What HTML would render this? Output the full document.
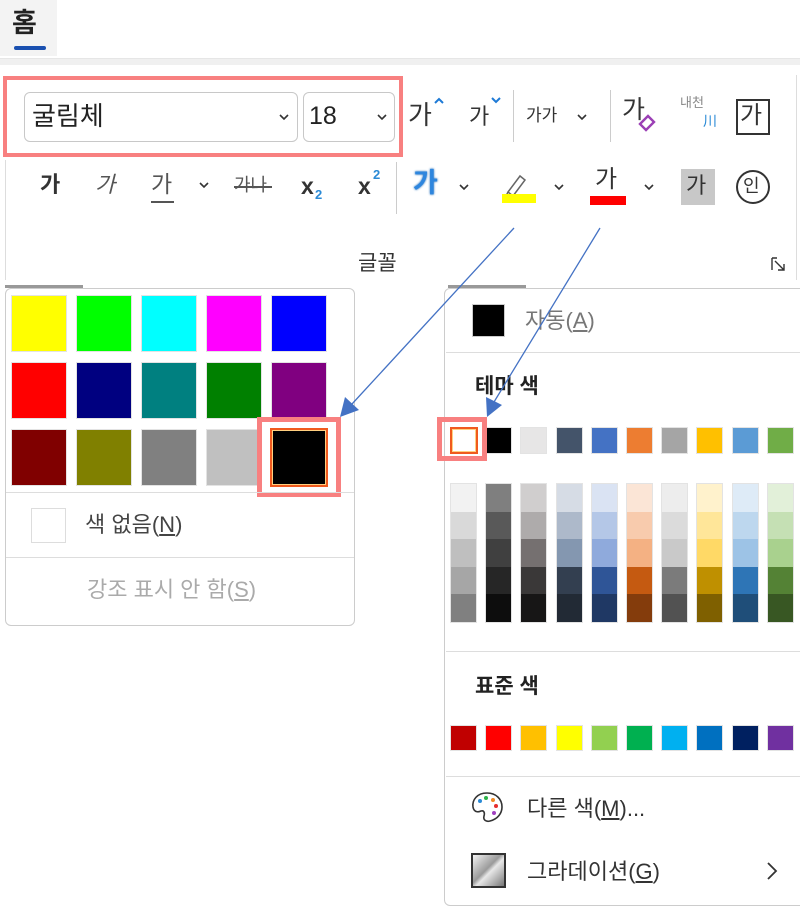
<!DOCTYPE html>
<html><head><meta charset="utf-8"><style>
*{margin:0;padding:0;box-sizing:border-box}
body{width:800px;height:909px;background:#fff;position:relative;overflow:hidden;font-family:"Liberation Sans","Noto Sans CJK KR",sans-serif;color:#333}
.a{position:absolute}
.t{position:absolute;white-space:nowrap;line-height:1}
.sw{position:absolute;border:1px solid #e3e3e3}
</style></head><body>
<div class="a" style="left:0;top:0;width:57px;height:56px;background:#f3f3f3"></div>
<div class="t" style="left:12px;top:10px;font-size:27px;color:#222;font-weight:bold">홈</div>
<div class="a" style="left:14px;top:46px;width:32px;height:4px;background:#1a50b0;border-radius:2px"></div>
<div class="a" style="left:0;top:58px;width:800px;height:7px;background:#f0f0f0;border-top:1px solid #e6e6e6"></div>
<div class="a" style="left:5px;top:160px;width:1px;height:120px;background:#ddd"></div>
<div class="a" style="left:796px;top:75px;width:1px;height:205px;background:#ddd"></div>
<div class="a" style="left:3px;top:76px;width:400px;height:81px;border:4px solid #f88080"></div>
<div class="a" style="left:24px;top:92px;width:274px;height:50px;border:1px solid #c8c8c8;border-radius:6px"></div>
<div class="t" style="left:32px;top:103px;font-size:26px;color:#222">굴림체</div>
<svg class="a" style="left:278px;top:112px" width="12" height="10"><path d="M2 3l4 4 4-4" stroke="#333" stroke-width="1.6" fill="none"/></svg>
<div class="a" style="left:303px;top:92px;width:92px;height:50px;border:1px solid #c8c8c8;border-radius:6px"></div>
<div class="t" style="left:309px;top:104px;font-size:25px;color:#222">18</div>
<svg class="a" style="left:376px;top:112px" width="12" height="10"><path d="M2 3l4 4 4-4" stroke="#333" stroke-width="1.6" fill="none"/></svg>
<div class="t" style="left:408px;top:102px;font-size:26px;color:#333">가</div>
<svg class="a" style="left:434px;top:97px" width="10" height="8"><path d="M1 6l4-4 4 4" stroke="#1e7ad6" stroke-width="2" fill="none"/></svg>
<div class="t" style="left:469px;top:106px;font-size:22px;color:#333">가</div>
<svg class="a" style="left:491px;top:96px" width="10" height="8"><path d="M1 2l4 4 4-4" stroke="#1e7ad6" stroke-width="2" fill="none"/></svg>
<div class="a" style="left:513px;top:90px;width:1px;height:52px;background:#ccc"></div>
<div class="t" style="left:526px;top:107px;font-size:17px;color:#333">가가</div>
<svg class="a" style="left:576px;top:112px" width="12" height="10"><path d="M2 3l4 4 4-4" stroke="#333" stroke-width="1.6" fill="none"/></svg>
<div class="a" style="left:610px;top:90px;width:1px;height:52px;background:#ccc"></div>
<div class="t" style="left:622px;top:98px;font-size:25px;color:#333">가</div>
<svg class="a" style="left:636px;top:110px" width="24" height="24"><path d="M4 14l8-8 6 6-8 8z" stroke="#9b3fb5" stroke-width="2.4" fill="none"/></svg>
<div class="t" style="left:680px;top:96px;font-size:13px;color:#888">내천</div>
<div class="t" style="left:703px;top:114px;font-size:14px;color:#2a8ad6">川</div>
<div class="a" style="left:736px;top:99px;width:34px;height:36px;border:2px solid #333"></div>
<div class="t" style="left:740px;top:104px;font-size:24px;color:#333">가</div>
<div class="t" style="left:40px;top:174px;font-size:22px;font-weight:bold;color:#333">가</div>
<div class="t" style="left:95px;top:174px;font-size:22px;font-style:italic;color:#555">가</div>
<div class="t" style="left:151px;top:173px;font-size:23px;color:#555">가</div>
<div class="a" style="left:151px;top:201px;width:23px;height:2px;background:#555"></div>
<svg class="a" style="left:198px;top:180px" width="12" height="10"><path d="M2 3l4 4 4-4" stroke="#333" stroke-width="1.6" fill="none"/></svg>
<div class="t" style="left:234px;top:176px;font-size:18px;color:#555">가나</div>
<div class="a" style="left:234px;top:186px;width:38px;height:1.5px;background:#555"></div>
<div class="t" style="left:301px;top:175px;font-size:23px;font-weight:bold;color:#333">x</div>
<div class="t" style="left:315px;top:188px;font-size:13px;font-weight:bold;color:#2a8ad6">2</div>
<div class="t" style="left:358px;top:175px;font-size:23px;font-weight:bold;color:#333">x</div>
<div class="t" style="left:373px;top:168px;font-size:13px;font-weight:bold;color:#2a8ad6">2</div>
<div class="a" style="left:396px;top:162px;width:1px;height:52px;background:#ccc"></div>
<div class="t" style="left:413px;top:170px;font-size:27px;font-weight:bold;color:#2e86de;text-shadow:0 0 2px #1060b0">가</div>
<svg class="a" style="left:458px;top:182px" width="12" height="10"><path d="M2 3l4 4 4-4" stroke="#333" stroke-width="1.6" fill="none"/></svg>
<svg class="a" style="left:502px;top:168px" width="34" height="38"><path d="M6 24l12-16 5 4-12 16z M6 24l-2 4 6-1" stroke="#666" stroke-width="1.5" fill="none"/><rect x="0" y="26" width="34" height="9" fill="#ffff00"/></svg>
<svg class="a" style="left:553px;top:182px" width="12" height="10"><path d="M2 3l4 4 4-4" stroke="#333" stroke-width="1.6" fill="none"/></svg>
<div class="t" style="left:595px;top:168px;font-size:24px;color:#333">가</div>
<div class="a" style="left:590px;top:196px;width:36px;height:9px;background:#ff0000"></div>
<svg class="a" style="left:643px;top:182px" width="12" height="10"><path d="M2 3l4 4 4-4" stroke="#333" stroke-width="1.6" fill="none"/></svg>
<div class="a" style="left:681px;top:169px;width:34px;height:36px;background:#c8c8c8"></div>
<div class="t" style="left:686px;top:175px;font-size:22px;color:#333">가</div>
<div class="a" style="left:736px;top:170px;width:34px;height:34px;border:2px solid #333;border-radius:50%"></div>
<div class="t" style="left:743px;top:177px;font-size:18px;color:#333">인</div>
<div class="t" style="left:358px;top:253px;font-size:21px;color:#333">글꼴</div>
<svg class="a" style="left:770px;top:256px" width="16" height="16"><path d="M2 2v12M2 2h5M5 5l9 9M14 8v6h-6" stroke="#333" stroke-width="1.4" fill="none"/></svg>
<div class="a" style="left:5px;top:285px;width:78px;height:3px;background:#999"></div>
<div class="a" style="left:448px;top:285px;width:78px;height:3px;background:#999"></div>
<div class="a" style="left:5px;top:288px;width:350px;height:338px;border:1px solid #ccc;border-radius:6px;background:#fff"></div>
<div class="sw" style="left:11px;top:295px;width:56px;height:57px;background:#ffff00"></div>
<div class="sw" style="left:76px;top:295px;width:56px;height:57px;background:#00ff00"></div>
<div class="sw" style="left:141px;top:295px;width:56px;height:57px;background:#00ffff"></div>
<div class="sw" style="left:206px;top:295px;width:56px;height:57px;background:#ff00ff"></div>
<div class="sw" style="left:271px;top:295px;width:56px;height:57px;background:#0000ff"></div>
<div class="sw" style="left:11px;top:362px;width:56px;height:57px;background:#ff0000"></div>
<div class="sw" style="left:76px;top:362px;width:56px;height:57px;background:#000080"></div>
<div class="sw" style="left:141px;top:362px;width:56px;height:57px;background:#008080"></div>
<div class="sw" style="left:206px;top:362px;width:56px;height:57px;background:#008000"></div>
<div class="sw" style="left:271px;top:362px;width:56px;height:57px;background:#800080"></div>
<div class="sw" style="left:11px;top:429px;width:56px;height:57px;background:#800000"></div>
<div class="sw" style="left:76px;top:429px;width:56px;height:57px;background:#808000"></div>
<div class="sw" style="left:141px;top:429px;width:56px;height:57px;background:#808080"></div>
<div class="sw" style="left:206px;top:429px;width:56px;height:57px;background:#c0c0c0"></div>
<div class="a" style="left:257px;top:417px;width:84px;height:80px;border:5px solid #f88080"></div>
<div class="a" style="left:270px;top:428px;width:58px;height:59px;background:#000;border:2px solid #f05a1e;box-shadow:inset 0 0 0 1px #ffd080"></div>
<div class="a" style="left:6px;top:492px;width:348px;height:1px;background:#ddd"></div>
<div class="a" style="left:31px;top:508px;width:35px;height:35px;border:1px solid #ddd"></div>
<div class="t" style="left:85px;top:514px;font-size:22px;color:#444">색 없음(<u>N</u>)</div>
<div class="a" style="left:6px;top:557px;width:348px;height:1px;background:#ddd"></div>
<div class="t" style="left:87px;top:579px;font-size:22px;color:#aaa">강조 표시 안 함(<u>S</u>)</div>
<div class="a" style="left:444px;top:288px;width:370px;height:618px;border:1px solid #ccc;border-radius:6px;background:#fff"></div>
<div class="a" style="left:472px;top:304px;width:33px;height:33px;background:#000;border:1px solid #ccc"></div>
<div class="t" style="left:525px;top:310px;font-size:22px;color:#777">자동(<u>A</u>)</div>
<div class="a" style="left:446px;top:352px;width:354px;height:1px;background:#ddd"></div>
<div class="t" style="left:475px;top:376px;font-size:21px;font-weight:bold;color:#222">테마 색</div>
<div class="a" style="left:446px;top:651px;width:354px;height:1px;background:#ddd"></div>
<div class="t" style="left:475px;top:676px;font-size:21px;font-weight:bold;color:#222">표준 색</div>
<div class="a" style="left:446px;top:776px;width:354px;height:1px;background:#ddd"></div>
<svg class="a" style="left:469px;top:789px" width="36" height="36" viewBox="0 0 36 36"><path d="M18 4C8 4 3 11 4 18c1 6 6 5 8 4 3-1 4 2 3 5-1 4 2 6 6 5 8-2 12-8 12-14C33 10 27 4 18 4z" stroke="#333" stroke-width="1.6" fill="none"/><circle cx="11" cy="12" r="2" fill="#2a8ad6"/><circle cx="17" cy="9" r="2" fill="#2db34a"/><circle cx="24" cy="11" r="2" fill="#f08a24"/><circle cx="27" cy="17" r="2" fill="#e62e2e"/><circle cx="25" cy="24" r="2" fill="#a040c0"/></svg>
<div class="t" style="left:527px;top:798px;font-size:22px;color:#333">다른 색(<u>M</u>)...</div>
<div class="a" style="left:471px;top:853px;width:35px;height:35px;border:2px solid #333;background:linear-gradient(135deg,#f4f4f4,#9a9a9a 45%,#e8e8e8 55%,#777)"></div>
<div class="t" style="left:527px;top:861px;font-size:22px;color:#333">그라데이션(<u>G</u>)</div>
<svg class="a" style="left:765px;top:860px" width="14" height="22"><path d="M3 3l8 8-8 8" stroke="#333" stroke-width="1.8" fill="none"/></svg>
<div id="sw"></div>
<div class="a" style="left:437px;top:417px;width:50px;height:44px;border:5px solid #f88080"></div>
<svg class="a" style="left:0;top:0" width="800" height="909"><line x1="514" y1="228" x2="352" y2="404" stroke="#4472c4" stroke-width="1.3"/><polygon points="340,417 345,397 359,410" fill="#4472c4"/><line x1="600" y1="228" x2="494" y2="402" stroke="#4472c4" stroke-width="1.3"/><polygon points="487,417 486,397 502,405" fill="#4472c4"/></svg>
<script>
var th=["ffffff","000000","e7e6e6","44546a","4472c4","ed7d31","a5a5a5","ffc000","5b9bd5","70ad47"];
var st=["c00000","ff0000","ffc000","ffff00","92d050","00b050","00b0f0","0070c0","002060","7030a0"];
var gr=[["f2f2f2","d9d9d9","bfbfbf","a6a6a6","808080"],["7f7f7f","595959","404040","262626","0d0d0d"],["d0cece","aeabab","757070","3a3838","171616"],["d6dce5","adb9ca","8497b0","333f50","222a35"],["dae3f3","b4c7e7","8faadc","2f5597","1f3864"],["fbe5d6","f8cbad","f4b183","c55a11","843c0c"],["ededed","dbdbdb","c9c9c9","7b7b7b","525252"],["fff2cc","ffe699","ffd966","bf9000","7f6000"],["deebf7","bdd7ee","9dc3e6","2e75b6","1f4e79"],["e2f0d9","c5e0b4","a9d18e","548235","385723"]];
var h="";
for(var i=0;i<10;i++){var x=450+i*35.2;
if(i==0)h+='<div class="a" style="left:'+(x)+'px;top:427px;width:28px;height:27px;background:#fff;border:2px solid #f05a1e;box-shadow:inset 0 0 0 1px #ffd080"></div>';
else h+='<div class="sw" style="left:'+x+'px;top:427px;width:27px;height:27px;background:#'+th[i]+'"></div>';
h+='<div class="a" style="left:'+x+'px;top:483px;width:27px;height:140px;border:1px solid #e3e3e3"></div>';
for(var j=0;j<5;j++)h+='<div class="a" style="left:'+(x+1)+'px;top:'+(484+j*27.6)+'px;width:25px;height:28px;background:#'+gr[i][j]+'"></div>';
h+='<div class="sw" style="left:'+x+'px;top:725px;width:27px;height:26px;background:#'+st[i]+'"></div>';}
document.getElementById("sw").outerHTML=h;
</script>
</body></html>
